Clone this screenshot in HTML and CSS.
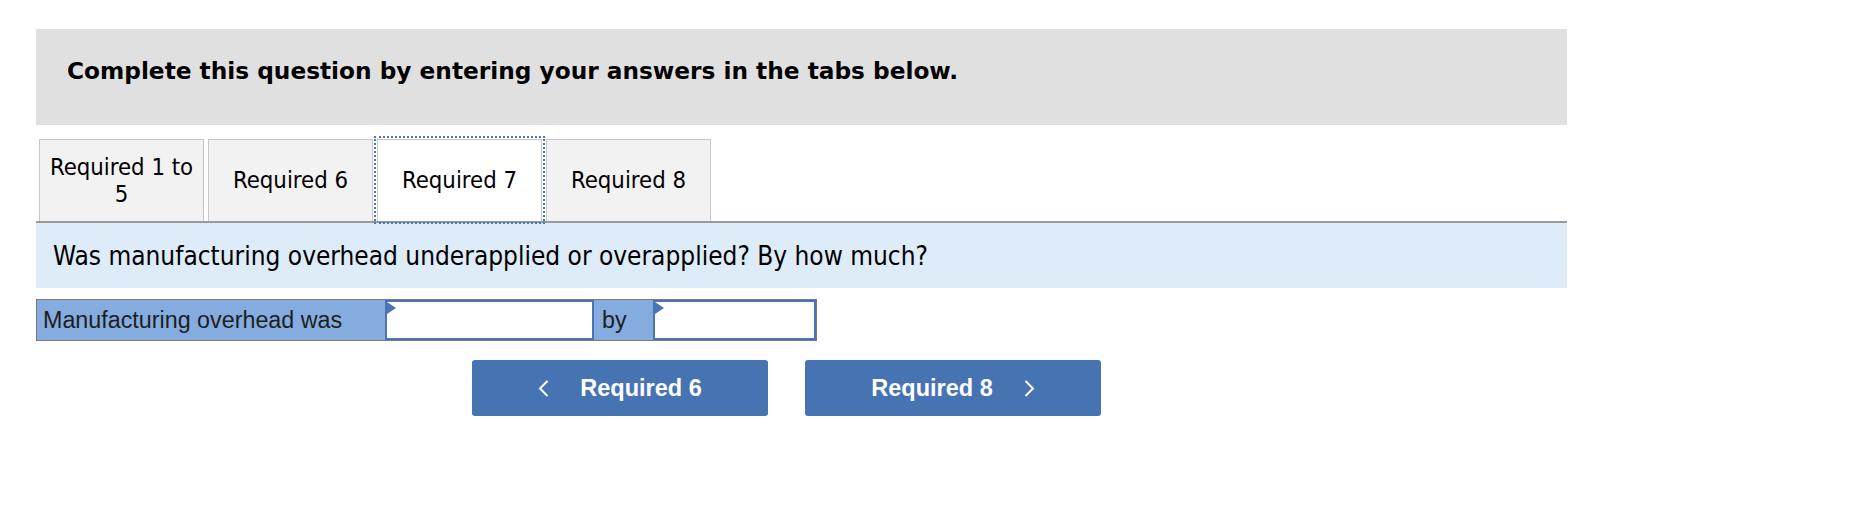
FILE: index.html
```html
<!DOCTYPE html>
<html lang="en">
<head>
<meta charset="utf-8">
<title>Required 7</title>
<link rel="stylesheet" href="styles.css">
</head>
<body>
<div class="page">
  <div class="instructions">
    <h2 class="instructions-title">Complete this question by entering your answers in the tabs below.</h2>
  </div>
  <div class="tabs">
    <div class="tab">Required 1 to 5</div>
    <div class="tab">Required 6</div>
    <div class="tab tab-active">Required 7</div>
    <div class="tab">Required 8</div>
  </div>
  <div class="question">Was manufacturing overhead underapplied or overapplied? By how much?</div>
  <div class="answer-row">
    <div class="cell-label cell-main">Manufacturing overhead was</div>
    <div class="cell-input cell-input-wide"><span class="flag"></span><input class="answer-input" type="text"></div>
    <div class="cell-label cell-by">by</div>
    <div class="cell-input cell-input-narrow"><span class="flag"></span><input class="answer-input" type="text"></div>
  </div>
  <div class="nav">
    <button class="nav-btn" type="button">
      <svg class="chev" width="11" height="17" viewBox="0 0 11 17"><polyline points="9.5,1 2,8.5 9.5,16" fill="none" stroke="#fff" stroke-width="2"/></svg>
      <span>Required 6</span>
    </button>
    <button class="nav-btn" type="button">
      <span>Required 8</span>
      <svg class="chev" width="11" height="17" viewBox="0 0 11 17"><polyline points="1.5,1 9,8.5 1.5,16" fill="none" stroke="#fff" stroke-width="2"/></svg>
    </button>
  </div>
</div>
</body>
</html>
```

FILE: styles.css
```css
html, body {
  margin: 0;
  background: #fff;
}

.page {
  margin-left: 36px;
  width: 1531px;
  padding-top: 29px;
}

.instructions {
  height: 96px;
  box-sizing: border-box;
  background: #e0e0e0;
  padding: 28px 0 0 31px;
}

.instructions-title {
  margin: 0;
  font-family: "DejaVu Sans", Verdana, sans-serif;
  font-weight: bold;
  font-size: 23.25px;
  line-height: 27px;
  color: #000;
}

.tabs {
  display: flex;
  gap: 4px;
  padding-left: 3px;
  margin-top: 14px;
  border-bottom: 2px solid #999;
}

.tab {
  width: 165px;
  height: 82px;
  box-sizing: border-box;
  padding: 0 5px;
  border: 1px solid #c8c8c8;
  border-bottom: 0;
  background: #f2f2f2;
  display: flex;
  align-items: center;
  justify-content: center;
  text-align: center;
  font-family: "DejaVu Sans Condensed", "DejaVu Sans", sans-serif;
  font-stretch: condensed;
  font-size: 23.7px;
  line-height: 27px;
  color: #000;
}

.tab-active {
  background: #fff;
  outline: 2px dotted #4a76bd;
  outline-offset: 1px;
}

.question {
  height: 65px;
  box-sizing: border-box;
  background: #deebf8;
  padding-left: 17px;
  display: flex;
  align-items: center;
  font-family: "DejaVu Sans Condensed", "DejaVu Sans", sans-serif;
  font-stretch: condensed;
  font-size: 26px;
  color: #000;
}

.answer-row {
  display: flex;
  width: max-content;
  margin-top: 11px;
  border: 1px solid #7a7a7a;
}

.cell-label {
  height: 40px;
  box-sizing: border-box;
  background: #84acdf;
  display: flex;
  align-items: center;
  font-family: "Liberation Sans", Arial, sans-serif;
  font-size: 23.3px;
  color: #1e1e1e;
}

.cell-main {
  width: 348px;
  padding-left: 6px;
}

.cell-by {
  width: 59px;
  padding-left: 8px;
}

.cell-input {
  position: relative;
  height: 40px;
  box-sizing: border-box;
  border: 2px solid #4b74b2;
  background: #fff;
}

.cell-input-wide {
  width: 209px;
}

.cell-input-narrow {
  width: 163px;
}

.flag {
  position: absolute;
  left: 0;
  top: 0;
  width: 0;
  height: 0;
  border-top: 6px solid transparent;
  border-bottom: 6px solid transparent;
  border-left: 9px solid #4b74b2;
}

.answer-input {
  display: block;
  width: 100%;
  height: 100%;
  box-sizing: border-box;
  border: 0;
  padding: 0 6px;
  margin: 0;
  background: transparent;
  outline: none;
  font-family: "Liberation Sans", Arial, sans-serif;
  font-size: 20px;
}

.nav {
  display: flex;
  gap: 37px;
  margin-top: 19px;
  padding-left: 436px;
}

.nav-btn {
  width: 296px;
  height: 56px;
  border: 0;
  border-radius: 3px;
  background: #4674b3;
  color: #fff;
  display: flex;
  align-items: center;
  justify-content: center;
  gap: 31px;
  padding: 0;
  font-family: "Liberation Sans", Arial, sans-serif;
  font-weight: bold;
  font-size: 23.5px;
}

.chev {
  display: block;
}
```
